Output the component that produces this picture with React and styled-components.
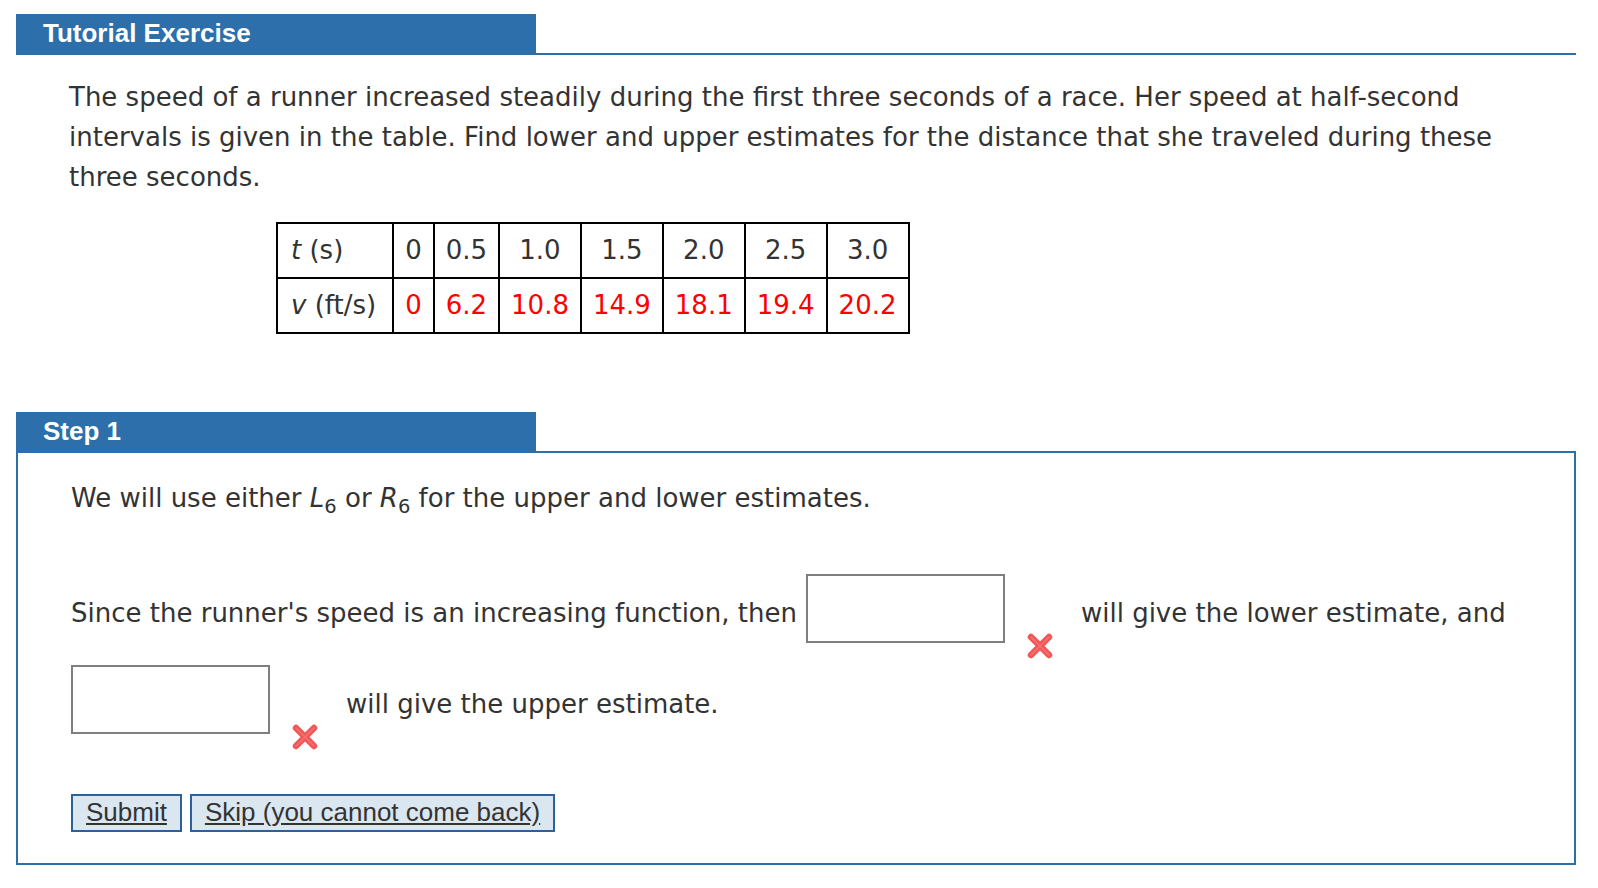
import React from 'react'
import styled, { createGlobalStyle } from 'styled-components'

const Global = createGlobalStyle`
  body {
    margin: 0;
    background: #fff;
    color: #333;
    font-family: Verdana, "DejaVu Sans", sans-serif;
  }
`

const Page = styled.div`
  padding: 14px 0 0 16px;
`

const Section = styled.section`
  width: 1560px;
  margin-bottom: ${(p) => p.gap || 0}px;
`

const HeadBar = styled.div`
  display: flex;
  border-bottom: ${(p) => (p.boxed ? 'none' : '2px solid #2c6fab')};
`

const Tab = styled.h2`
  margin: 0;
  width: 520px;
  height: 39px;
  box-sizing: border-box;
  padding-left: 27px;
  background: #2c6fab;
  color: #fff;
  font: bold 26px/39px "Liberation Sans", Arial, sans-serif;
`

const Body = styled.div`
  padding: ${(p) => p.pad};
  border: ${(p) => (p.boxed ? '2px solid #2c6fab' : 'none')};
  font-size: 26px;
  line-height: 40px;

  sub {
    font-size: 0.75em;
    line-height: 0;
  }
`

const Para = styled.p`
  margin: 0;
`

const DataTable = styled.table`
  margin: 25px 0 0 207px;
  border-collapse: collapse;
  font-size: 26px;
  line-height: 31px;

  td {
    border: 2px solid #000;
    padding: 11px 11px 11px;
  }
`

const Cell = styled.td`
  color: ${(p) => (p.red ? '#f00' : '#333')};
  text-align: ${(p) => (p.left ? 'left' : 'center')};

  && {
    padding-left: ${(p) => (p.left ? '13px' : '11px')};
    padding-right: ${(p) => (p.left ? '16px' : '11px')};
  }
`

const Row = styled.div`
  display: flex;
  align-items: flex-start;
  margin-top: ${(p) => p.top}px;
`

const Text = styled.span`
  margin-top: 19px;
  margin-left: ${(p) => p.left || 0}px;
`

const Answer = styled.input`
  width: 199px;
  height: 69px;
  box-sizing: border-box;
  border: 2px solid #7f7f7f;
  margin: 0 0 0 ${(p) => p.left || 0}px;
  padding: 0 8px;
  font-size: 22px;
  background: #fff;
`

const Wrong = styled.svg`
  margin: 59px 0 0 22px;
  flex: none;
`

const Buttons = styled.div`
  display: flex;
  gap: 8px;
  margin-top: 44px;
`

const Btn = styled.button`
  background: #dae6f0;
  border: 2px solid #2d6199;
  padding: 2px 13px 3px;
  color: #333;
  font: 26px/29px "Liberation Sans", Arial, sans-serif;
  text-decoration: underline;
  cursor: pointer;
`

const Cross = () => (
  <Wrong width="26" height="26" viewBox="0 0 26 26">
    <path d="M4 4 L22 22 M22 4 L4 22" stroke="#f25757" strokeWidth="6.5" strokeLinecap="round" />
    <path d="M4 4 L22 22 M22 4 L4 22" stroke="#ff8c8c" strokeWidth="1.5" strokeLinecap="round" opacity="0.5" />
  </Wrong>
)

const times = ['0', '0.5', '1.0', '1.5', '2.0', '2.5', '3.0']
const speeds = ['0', '6.2', '10.8', '14.9', '18.1', '19.4', '20.2']

const App = () => {
  return (
    <Page>
      <Global />
      <Section gap={78}>
        <HeadBar>
          <Tab>Tutorial Exercise</Tab>
        </HeadBar>
        <Body pad="22px 52px 0 53px">
          <Para>
            The speed of a runner increased steadily during the first three seconds of a race. Her speed at half-second
            intervals is given in the table. Find lower and upper estimates for the distance that she traveled during these
            three seconds.
          </Para>
          <DataTable>
            <tbody>
              <tr>
                <Cell left><i>t</i> (s)</Cell>
                {times.map((t) => <Cell key={t}>{t}</Cell>)}
              </tr>
              <tr>
                <Cell left><i>v</i> (ft/s)</Cell>
                {speeds.map((v) => <Cell key={v} red>{v}</Cell>)}
              </tr>
            </tbody>
          </DataTable>
        </Body>
      </Section>

      <Section>
        <HeadBar boxed>
          <Tab>Step 1</Tab>
        </HeadBar>
        <Body boxed pad="25px 0 31px 53px">
          <Para>
            We will use either <i>L</i><sub>6</sub> or <i>R</i><sub>6</sub> for the upper and lower estimates.
          </Para>
          <Row top={56}>
            <Text>Since the runner's speed is an increasing function, then</Text>
            <Answer left={9} />
            <Cross />
            <Text left={28}>will give the lower estimate, and</Text>
          </Row>
          <Row top={6}>
            <Answer />
            <Cross />
            <Text left={28}>will give the upper estimate.</Text>
          </Row>
          <Buttons>
            <Btn>Submit</Btn>
            <Btn>Skip (you cannot come back)</Btn>
          </Buttons>
        </Body>
      </Section>
    </Page>
  )
}

export default App
